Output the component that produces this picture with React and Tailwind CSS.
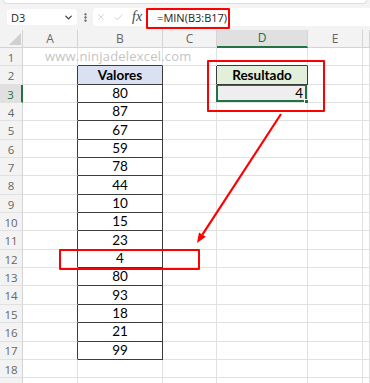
import React from "react";
import { X, Check, ChevronDown, EllipsisVertical } from "lucide-react";

const values = [80, 87, 67, 59, 78, 44, 10, 15, 23, 4, 80, 93, 18, 21, 99];
const letters = ["A", "B", "C", "D", "E", ""];
const rows = Array.from({ length: 19 }, (_, i) => i + 1);
const GRID = "grid grid-cols-[23px_55px_85px_54px_91px_55px_1fr] grid-rows-[100%]";

const cellClass = (row, col) => {
  const inTable = row >= 2 && row <= 17;
  const rightDark =
    ((col === 0 || col === 1) && inTable) || ((col === 2 || col === 3) && row === 2);
  const bottomDark =
    (col === 1 && row <= 17) || (col === 3 && (row === 1 || row === 2));

  let bg = "bg-white";
  if (col === 1 && row === 2) bg = "bg-[#d9e1f2]";
  if (col === 3 && row === 2) bg = "bg-[#e2efda]";
  if (col === 3 && row === 3) bg = "bg-[#eeeeee]";

  return [
    "relative flex items-center border-r border-b min-w-0 min-h-0",
    rightDark ? "border-r-[#3c3c3c]" : "border-r-[#e1e1e1]",
    bottomDark ? "border-b-[#3c3c3c]" : "border-b-[#e1e1e1]",
    bg,
  ].join(" ");
};

const cellContent = (row, col) => {
  if (col === 1 && row === 2)
    return <span className="w-full text-center font-bold">Valores</span>;
  if (col === 1 && row >= 3 && row <= 17)
    return <span className="w-full text-center">{values[row - 3]}</span>;
  if (col === 3 && row === 2)
    return <span className="w-full text-center font-bold">Resultado</span>;
  if (col === 3 && row === 3)
    return (
      <>
        <span className="w-full text-right pr-[4px]">4</span>
        <div className="absolute -left-[1px] -top-[1px] right-0 bottom-0 border-2 border-[#217346]" />
        <div className="absolute -right-[2px] -bottom-[2px] w-[5px] h-[5px] bg-[#217346] border border-white" />
      </>
    );
  return null;
};

export default function App() {
  return (
    <div className="relative w-[370px] h-[383px] overflow-hidden bg-white font-['Open_Sans',sans-serif]">
      {/* formula bar */}
      <div className="h-[30px] bg-[#f3f3f3]">
        <div className="mx-[3px] h-[4px] rounded-b-[5px] bg-white border border-t-0 border-[#dedede]" />
        <div className="flex items-center h-[18px] mt-[4px]">
          <div className="ml-[7px] w-[70px] h-[16px] bg-white rounded-[4px] flex items-center justify-between pl-[4px] pr-[3px] text-[11px] leading-none text-[#222]">
            D3
            <ChevronDown className="w-[11px] h-[11px] text-[#333]" strokeWidth={2.5} />
          </div>
          <div className="w-[16px] flex justify-center">
            <EllipsisVertical className="w-[11px] h-[11px] text-[#555]" strokeWidth={3} />
          </div>
          <div className="flex-1 h-[18px] bg-white rounded-l-[4px] flex items-center">
            <X className="ml-[3px] w-[10px] h-[10px] text-[#bdbdbd]" strokeWidth={1.5} />
            <Check className="ml-[7px] w-[11px] h-[11px] text-[#bdbdbd]" strokeWidth={1.5} />
            <span className="ml-[8px] font-['Liberation_Serif',serif] italic text-[14px] text-[#444] leading-none">
              fx
            </span>
            <span className="ml-[15px] text-[11px] leading-none text-[#222]">=MIN(B3:B17)</span>
          </div>
        </div>
      </div>

      {/* column headers */}
      <div className={`${GRID} h-[18px] bg-[#f3f3f3] text-[12px] leading-none text-[#666]`}>
        <div className="relative border-r border-b border-[#d4d4d4]">
          <svg className="absolute right-[1px] bottom-[2px]" width="12" height="12" viewBox="0 0 12 12">
            <polygon points="12,0 12,12 0,12" fill="#d0d0d0" />
          </svg>
        </div>
        {letters.map((l, i) =>
          l === "D" ? (
            <div
              key={i}
              className="flex items-center justify-center bg-[#e0e0e0] border-r border-r-[#d4d4d4] border-b-2 border-b-[#217346] text-[#217346]"
            >
              {l}
            </div>
          ) : (
            <div
              key={i}
              className="flex items-center justify-center border-r border-b border-[#d4d4d4]"
            >
              {l}
            </div>
          )
        )}
      </div>

      {/* rows */}
      {rows.map((row) => (
        <div
          key={row}
          className={`${GRID} h-[18.35px] overflow-hidden text-[13.5px] leading-[15px] text-black font-['Lato',sans-serif]`}
        >
          {row === 3 ? (
            <div className="flex items-end justify-center pb-[2px] bg-[#e0e0e0] border-r-2 border-r-[#217346] border-b border-b-[#e1e1e1] text-[11.5px] leading-none text-[#217346] font-['Open_Sans',sans-serif]">
              {row}
            </div>
          ) : (
            <div className="flex items-end justify-center pb-[2px] bg-[#f3f3f3] border-r border-r-[#d4d4d4] border-b border-b-[#e1e1e1] text-[11.5px] leading-none text-[#666] font-['Open_Sans',sans-serif]">
              {row}
            </div>
          )}
          {[0, 1, 2, 3, 4, 5].map((col) => (
            <div key={col} className={cellClass(row, col)}>
              {cellContent(row, col)}
            </div>
          ))}
        </div>
      ))}

      {/* watermark */}
      <div className="absolute left-[45px] top-[47px] text-[13px] text-[#c4c4c4] tracking-[0.2px] pointer-events-none">
        www.ninjadelexcel.com
      </div>

      {/* annotations */}
      <div className="absolute left-[146px] top-[8px] w-[84px] h-[21px] border-2 border-[#ff0000] rounded-[1px]" />
      <div className="absolute left-[207px] top-[60px] w-[118px] h-[52px] border-2 border-[#ff0000] rounded-[1px]" />
      <div className="absolute left-[59px] top-[249px] w-[141px] h-[21px] border-2 border-[#ff0000] rounded-[1px]" />
      <svg className="absolute left-0 top-0 pointer-events-none" width="370" height="383">
        <line x1="281" y1="114" x2="202.4" y2="234.6" stroke="#ff0000" strokeWidth="2.2" />
        <polygon points="197,243 205.8,236.8 199,232.4" fill="#ff0000" />
      </svg>
    </div>
  );
}
